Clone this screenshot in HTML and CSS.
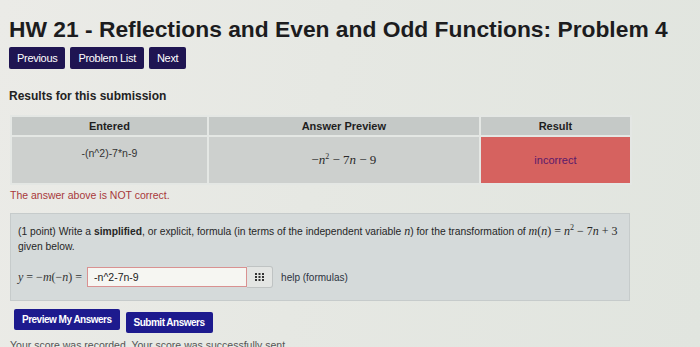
FILE: index.html
```html
<!DOCTYPE html>
<html>
<head>
<meta charset="utf-8">
<link rel="stylesheet" href="styles.css">
</head>
<body>
<div class="page">
  <h1 class="title">HW 21 - Reflections and Even and Odd Functions: Problem 4</h1>
  <nav class="nav">
    <span class="nav-btn">Previous</span>
    <span class="nav-btn">Problem List</span>
    <span class="nav-btn">Next</span>
  </nav>
  <h3 class="results-head">Results for this submission</h3>
  <table class="results">
    <tr class="head-row">
      <th class="c1">Entered</th>
      <th class="c2">Answer Preview</th>
      <th class="c3">Result</th>
    </tr>
    <tr class="body-row">
      <td class="c1 entered">-(n^2)-7*n-9</td>
      <td class="c2 math">−<i>n</i><sup>2</sup> − 7<i>n</i> − 9</td>
      <td class="c3 bad">incorrect</td>
    </tr>
  </table>
  <p class="not-correct">The answer above is NOT correct.</p>
  <div class="problem">
    <p class="prob-text">(1 point) Write a <b>simplified</b>, or explicit, formula (in terms of the independent variable <i class="m">n</i>) for the transformation of <span class="m"><i>m</i>(<i>n</i>) = <i>n</i><sup>2</sup> − 7<i>n</i> + 3</span> given below.</p>
    <div class="answer-row">
      <span class="m lhs"><i>y</i> = −<i>m</i>(−<i>n</i>) =</span>
      <span class="input">-n^2-7n-9</span>
      <span class="keypad">
        <svg width="9" height="8" viewBox="0 0 9 8"><g fill="#333"><rect x="0" y="0" width="2" height="2"/><rect x="3.5" y="0" width="2" height="2"/><rect x="7" y="0" width="2" height="2"/><rect x="0" y="3" width="2" height="2"/><rect x="3.5" y="3" width="2" height="2"/><rect x="7" y="3" width="2" height="2"/><rect x="0" y="6" width="2" height="2"/><rect x="3.5" y="6" width="2" height="2"/><rect x="7" y="6" width="2" height="2"/></g></svg>
      </span>
      <span class="help">help (formulas)</span>
    </div>
  </div>
  <div class="submit-row">
    <span class="sub-btn">Preview My Answers</span>
    <span class="sub-btn second">Submit Answers</span>
  </div>
  <p class="score">Your score was recorded. Your score was successfully sent.</p>
</div>
</body>
</html>
```

FILE: styles.css
```css
html, body {
  margin: 0;
  padding: 0;
}
body {
  width: 700px;
  height: 347px;
  overflow: hidden;
  background: linear-gradient(100deg, #ebebe7 0%, #e6e8e3 45%, #e1e5df 100%);
  font-family: "Liberation Sans", Arial, sans-serif;
  color: #222;
}
.page {
  padding: 14px 0 0 9px;
}
.title {
  margin: 0;
  font-size: 22.8px;
  font-weight: bold;
  color: #1c1c1e;
  line-height: 30px;
  white-space: nowrap;
}
.nav {
  display: flex;
  gap: 5px;
  margin-top: 3px;
}
.nav-btn {
  background: #1f1552;
  color: #fff;
  font-size: 11px;
  height: 22px;
  line-height: 22px;
  padding: 0 8px;
  border-radius: 2px;
  letter-spacing: -0.3px;
}
.results-head {
  margin: 20px 0 0 0;
  font-size: 12px;
  font-weight: bold;
  color: #222;
  line-height: 14px;
}
.results {
  margin-top: 12px;
  margin-left: 1px;
  border-collapse: collapse;
  border: 1px solid #a7abaa;
  width: 622px;
}
.results th, .results td {
  border: 2px solid #e4e7e4;
  text-align: center;
  padding: 0;
}
.c1 { width: 196px; }
.c2 { width: 272px; }
.c3 { width: 150px; }
.head-row th {
  background: #c5c9c7;
  height: 18px;
  font-size: 11px;
  font-weight: bold;
  color: #1e1e1e;
}
.body-row td {
  background: #cdd0ce;
  height: 36px;
  font-size: 10.5px;
  color: #333;
}
.entered {
  vertical-align: top;
  padding-top: 10px !important;
}
.math {
  font-family: "Liberation Serif", "Times New Roman", serif;
  font-size: 13px !important;
  color: #2a2a2a !important;
}
.math sup, .m sup {
  font-size: 8px;
}
.body-row td.bad {
  background: #d6625f;
  color: #5a1a6a;
  font-size: 11px;
}
.not-correct {
  margin: 3px 0 0 1px;
  font-size: 10.5px;
  color: #a8383a;
  line-height: 14px;
}
.problem {
  margin: 11px 0 0 1px;
  width: 604px;
  height: 80px;
  padding: 6px 7px 0 7px;
  background: #d5dada;
  border: 1px solid #c6cbcb;
}
.prob-text {
  margin: 0;
  font-size: 10.3px;
  line-height: 15px;
  color: #262626;
  width: 600px;
}
.m {
  font-family: "Liberation Serif", "Times New Roman", serif;
  font-size: 12px;
}
.answer-row {
  display: flex;
  align-items: center;
  margin-top: 12px;
}
.lhs {
  font-size: 12px;
  color: #333;
  margin-right: 5px;
}
.input {
  width: 152px;
  height: 18px;
  line-height: 18px;
  padding-left: 6px;
  background: #f6f6f2;
  border: 1px solid #d99191;
  font-size: 10.5px;
  color: #222;
}
.keypad {
  width: 25px;
  height: 20px;
  background: #e3e5e3;
  border: 1px solid #bfc3c3;
  border-left: none;
  border-radius: 0 3px 3px 0;
  display: flex;
  align-items: center;
  justify-content: center;
}
.help {
  margin-left: 8px;
  font-size: 10px;
  color: #2c3340;
}
.submit-row {
  display: flex;
  gap: 6px;
  margin: 8px 0 0 5px;
  align-items: flex-start;
}
.sub-btn {
  background: #1d1a8e;
  color: #fff;
  font-size: 10px;
  font-weight: bold;
  height: 21px;
  line-height: 21px;
  padding: 0 8px;
  border-radius: 2px;
  letter-spacing: -0.5px;
}
.sub-btn.second {
  margin-top: 3px;
}
.score {
  margin: 6px 0 0 1px;
  font-size: 10.5px;
  line-height: 12px;
  color: #555;
  white-space: nowrap;
}
```
